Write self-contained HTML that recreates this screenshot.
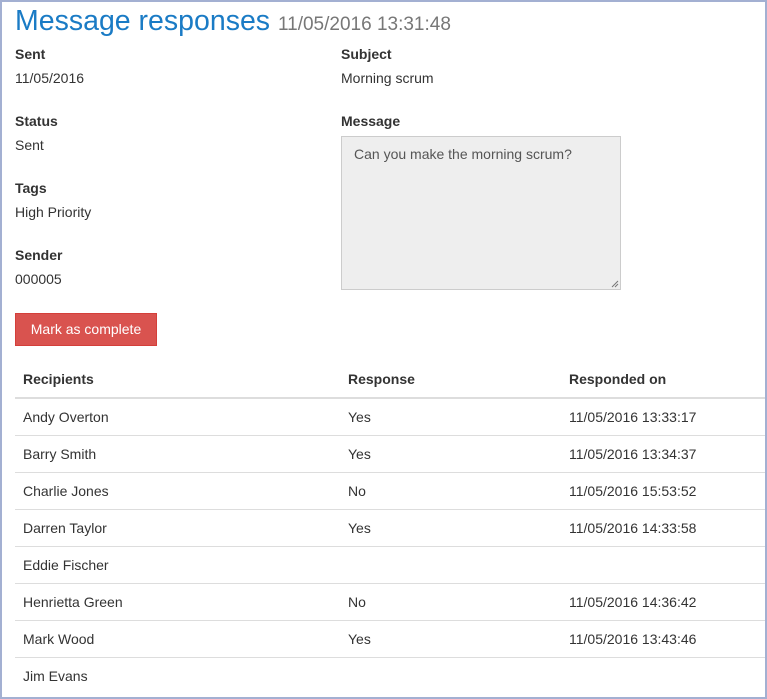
<!DOCTYPE html>
<html><head><style>
*{margin:0;padding:0;box-sizing:border-box}
body{width:767px;height:699px;background:#fff;font-family:"Liberation Sans",sans-serif;color:#333;font-size:14px;position:relative;overflow:hidden}
.frame{position:absolute;left:0;top:0;width:767px;height:699px;border:2px solid #a3b0d2}
.a{position:absolute;white-space:nowrap}
.b{font-weight:bold}
h1{position:absolute;left:15px;top:5px;font-weight:normal;font-size:28.5px;color:#1a7bc5;white-space:nowrap}
h1 small{font-size:19px;color:#777}
.ta{position:absolute;left:341px;top:136px;width:280px;height:154px;background:#eee;border:1px solid #ccc;padding:9px 12px;font-size:14px;color:#555}
.btn{position:absolute;left:15px;top:313px;width:142px;height:33px;background:#d9534f;border:1px solid #d43f3a;color:#fff;font-size:14px;text-align:center;line-height:31px}
.line{position:absolute;left:15px;width:750px;height:1px;background:#ddd}
</style></head><body>
<h1>Message responses <small>11/05/2016 13:31:48</small></h1>
<div class="a b" style="left:15px;top:46px">Sent</div><div class="a" style="left:15px;top:70px">11/05/2016</div>
<div class="a b" style="left:15px;top:113px">Status</div><div class="a" style="left:15px;top:137px">Sent</div>
<div class="a b" style="left:15px;top:180px">Tags</div><div class="a" style="left:15px;top:204px">High Priority</div>
<div class="a b" style="left:15px;top:247px">Sender</div><div class="a" style="left:15px;top:271px">000005</div>
<div class="a b" style="left:341px;top:46px">Subject</div><div class="a" style="left:341px;top:70px">Morning scrum</div>
<div class="a b" style="left:341px;top:113px">Message</div>
<div class="ta">Can you make the morning scrum?
<svg style="position:absolute;right:1px;bottom:1px" width="8" height="8"><path d="M7 1L1 7M7 4L4 7" stroke="#777" stroke-width="1"/></svg></div>
<div class="btn">Mark as complete</div>
<div class="a b" style="left:23px;top:371px">Recipients</div>
<div class="a b" style="left:348px;top:371px">Response</div>
<div class="a b" style="left:569px;top:371px">Responded on</div>
<div class="line" style="top:397px;height:2px"></div>
<div class="a" style="left:23px;top:409px">Andy Overton</div><div class="a" style="left:348px;top:409px">Yes</div><div class="a" style="left:569px;top:409px">11/05/2016 13:33:17</div>
<div class="line" style="top:435px"></div>
<div class="a" style="left:23px;top:446px">Barry Smith</div><div class="a" style="left:348px;top:446px">Yes</div><div class="a" style="left:569px;top:446px">11/05/2016 13:34:37</div>
<div class="line" style="top:472px"></div>
<div class="a" style="left:23px;top:483px">Charlie Jones</div><div class="a" style="left:348px;top:483px">No</div><div class="a" style="left:569px;top:483px">11/05/2016 15:53:52</div>
<div class="line" style="top:509px"></div>
<div class="a" style="left:23px;top:520px">Darren Taylor</div><div class="a" style="left:348px;top:520px">Yes</div><div class="a" style="left:569px;top:520px">11/05/2016 14:33:58</div>
<div class="line" style="top:546px"></div>
<div class="a" style="left:23px;top:557px">Eddie Fischer</div>
<div class="line" style="top:583px"></div>
<div class="a" style="left:23px;top:594px">Henrietta Green</div><div class="a" style="left:348px;top:594px">No</div><div class="a" style="left:569px;top:594px">11/05/2016 14:36:42</div>
<div class="line" style="top:620px"></div>
<div class="a" style="left:23px;top:631px">Mark Wood</div><div class="a" style="left:348px;top:631px">Yes</div><div class="a" style="left:569px;top:631px">11/05/2016 13:43:46</div>
<div class="line" style="top:657px"></div>
<div class="a" style="left:23px;top:668px">Jim Evans</div>
<div class="frame"></div>
</body></html>
